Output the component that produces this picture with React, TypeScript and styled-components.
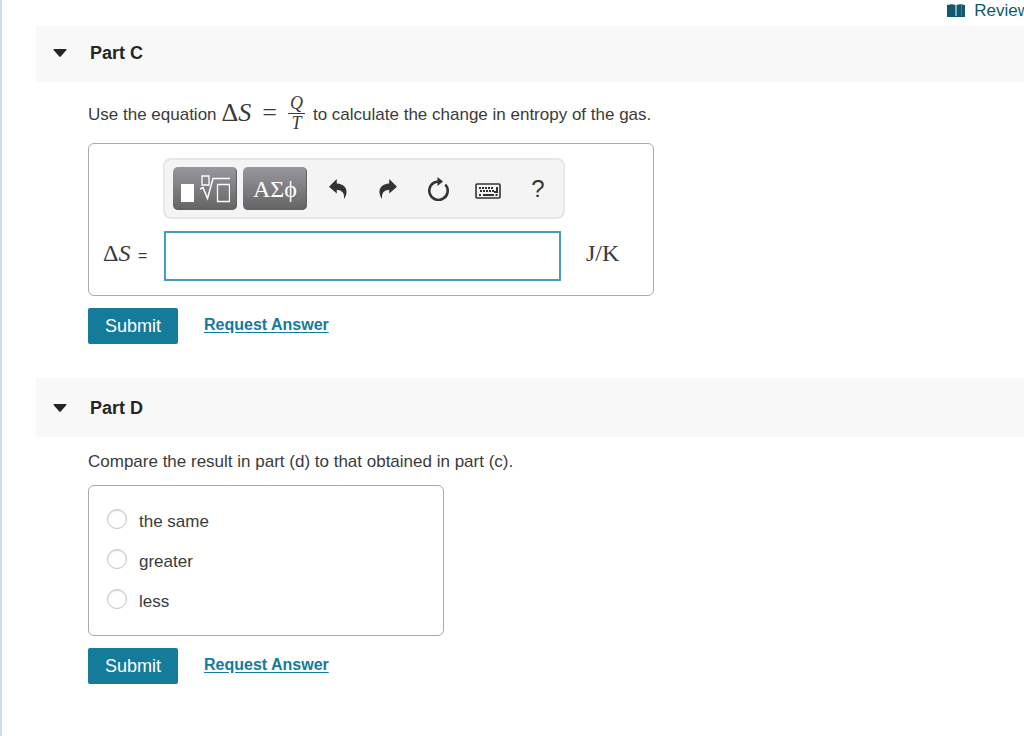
import React from 'react';
import styled, { createGlobalStyle } from 'styled-components';

const GlobalStyle = createGlobalStyle`
  * { box-sizing: border-box; }
  body {
    margin: 0;
    background: #fff;
    color: #3b3b3b;
    font: 17px/24px "Liberation Sans", Arial, sans-serif;
  }
  button, input { font-family: inherit; }
`;

const Page = styled.main`
  min-height: 100vh;
  padding-left: 34px;
  border-left: 2px solid #cfdaec;
  overflow: hidden;
`;

const TopBar = styled.nav`
  display: flex;
  justify-content: flex-end;
  height: 26px;
  margin-right: -6px;
`;

const ReviewLink = styled.a`
  display: flex;
  align-items: center;
  gap: 9px;
  height: 21px;
  color: #10596e;
  text-decoration: none;
`;

const PartHeader = styled.header<{ $tall?: boolean }>`
  display: flex;
  align-items: center;
  gap: 23px;
  padding: ${(p) => (p.$tall ? '18px 17px 17px' : '15px 17px 17px')};
  background: #f8f8f8;
`;

const Toggle = styled.button`
  display: flex;
  padding: 0;
  border: 0;
  background: none;
`;

const PartTitle = styled.h2`
  margin: 0;
  color: #252525;
  font-size: 18px;
  line-height: 24px;
`;

const PartBody = styled.div`
  padding: 12px 52px 34px;
`;

const Question = styled.p<{ $math?: boolean }>`
  display: flex;
  align-items: center;
  min-height: ${(p) => (p.$math ? 42 : 26)}px;
  margin: 0 0 ${(p) => (p.$math ? 7 : 10)}px;
`;

const Equation = styled.span`
  display: flex;
  align-items: center;
  gap: 11px;
  margin: 0 8px 4px 5px;
  font-family: "Liberation Serif", serif;
  font-size: 26px;
`;

const Fraction = styled.span`
  display: flex;
  flex-direction: column;
  align-items: center;
  width: 17px;
  font-size: 18px;
  font-style: italic;
  line-height: 18px;
`;

const Numerator = styled.span`
  width: 100%;
  padding-bottom: 1px;
  border-bottom: 1px solid #3b3b3b;
  text-align: center;
`;

const AnswerBox = styled.div`
  display: grid;
  grid-template-columns: 60px 402px auto;
  row-gap: 12px;
  align-items: center;
  max-width: 566px;
  padding: 14px;
  border: 1px solid #aaa;
  border-radius: 6px;
`;

const Toolbar = styled.div`
  grid-column: 2;
  display: flex;
  align-items: center;
  height: 61px;
  padding-left: 8px;
  border: 2px solid #e6e6e6;
  border-radius: 8px;
  background: #f4f4f4;
`;

const PaletteButton = styled.button`
  display: flex;
  align-items: center;
  justify-content: center;
  width: 64px;
  height: 43px;
  margin-right: 6px;
  padding: 0;
  border: 0;
  border-radius: 5px;
  background: linear-gradient(#98979f, #646464);
  box-shadow: inset -1px -1px 1px #606060;
  color: #fff;
  font-family: "Liberation Serif", serif;
  font-size: 24px;
  line-height: 24px;
`;

const ToolButton = styled.button`
  display: flex;
  align-items: center;
  justify-content: center;
  width: 50px;
  height: 43px;
  padding: 0;
  border: 0;
  background: none;
  color: #333;
  font-size: 24px;
`;

const VariableLabel = styled.label`
  grid-column: 1;
  padding-bottom: 4px;
  font-size: 16px;
  white-space: nowrap;
`;

const Variable = styled.span`
  margin-right: 3px;
  font-family: "Liberation Serif", serif;
  font-size: 24px;
`;

const AnswerInput = styled.input`
  width: 397px;
  height: 50px;
  margin-left: 1px;
  padding: 0 10px;
  border: 2px solid #4a9db8;
  background: #fff;
  font-size: 18px;
`;

const Units = styled.span`
  padding: 0 0 6px 21px;
  font-family: "Liberation Serif", serif;
  font-size: 24px;
`;

const Choices = styled.fieldset`
  display: flex;
  flex-direction: column;
  gap: 14px;
  max-width: 356px;
  margin: 0;
  padding: 23px 18px 20px;
  border: 1px solid #aaa;
  border-radius: 6px;
`;

const Choice = styled.label`
  display: flex;
  align-items: flex-start;
  gap: 12px;
  line-height: 26px;
`;

const Radio = styled.input`
  appearance: none;
  width: 20px;
  height: 20px;
  margin: 0;
  border: 1px solid #c4c4c4;
  border-radius: 50%;
  background: #fff;
  box-shadow: inset 0 1px 1px #ddd;
`;

const Actions = styled.div`
  display: flex;
  align-items: center;
  gap: 26px;
  margin-top: 12px;
`;

const SubmitButton = styled.button`
  width: 90px;
  height: 36px;
  padding: 0;
  border: 0;
  border-radius: 2px;
  background: #147b9a;
  color: #fff;
  font-size: 18px;
`;

const RequestLink = styled.a`
  padding-bottom: 3px;
  color: #147b9a;
  font-size: 16px;
  font-weight: bold;
  text-underline-offset: 2px;
`;

function Part({ title, tall, children }: { title: string; tall?: boolean; children: React.ReactNode }) {
  return (
    <section>
      <PartHeader $tall={tall}>
        <Toggle type="button" aria-label={`Collapse ${title}`}>
          <svg width="14" height="8" viewBox="0 0 14 8">
            <path d="M1 0h12q1 0 .4 1L8 7.2q-1 1-2 0L.6 1Q0 0 1 0Z" fill="#252525" />
          </svg>
        </Toggle>
        <PartTitle>{title}</PartTitle>
      </PartHeader>
      <PartBody>
        {children}
        <Actions>
          <SubmitButton type="button">Submit</SubmitButton>
          <RequestLink href="#request">Request Answer</RequestLink>
        </Actions>
      </PartBody>
    </section>
  );
}

const BookIcon = () => (
  <svg width="18" height="14" viewBox="0 0 18 14" fill="#10596e">
    <path d="M0 1Q5-.6 8.5 1v11.6Q5 11.400 0 12.600ZM9.500 1Q13-.6 18 1v11.600Q13 11.400 9.500 12.600Z" />
    <path d="M0 13h18v-1H0Z" />
    <path d="M14.500 1v11" stroke="#3b7f92" />
  </svg>
);

const RootIcon = () => (
  <svg width="50" height="28" viewBox="0 0 50 28" fill="none" stroke="#fff">
    <path d="M1 9h13v18H1Z" fill="#fff" stroke="none" />
    <path d="M22 1h7v9h-7Z" strokeWidth="1.300" />
    <path d="M20 14l3-1.500 4.500 11L33 3.500h17" strokeWidth="1.500" />
    <path d="M37.500 9.500h12v17h-12Z" strokeWidth="1.300" />
  </svg>
);

const ArrowPath = () => (
  <path d="M0 8 8 0v4.500C15 5 18.500 9 18 14q-.3 3-2.500 6.500 1-9-7.500-9.500V15Z" fill="#333" />
);

const UndoIcon = () => (
  <svg width="18" height="20" viewBox="0 0 18.500 20.500">
    <ArrowPath />
  </svg>
);

const RedoIcon = () => (
  <svg width="18" height="20" viewBox="0 0 18.500 20.500">
    <g transform="translate(18.500 0) scale(-1 1)">
      <ArrowPath />
    </g>
  </svg>
);

const ResetIcon = () => (
  <svg width="22" height="24" viewBox="0 0 22 24">
    <path d="M18.300 7.500A9.200 9.200 0 1 1 11 4.500" fill="none" stroke="#333" strokeWidth="2.600" />
    <path d="M10.500 0 16 4.600 10.500 9Z" fill="#333" />
  </svg>
);

const KeyboardIcon = () => (
  <svg width="26" height="20" viewBox="0 -4 26 20" fill="none" stroke="#333">
    <rect x="1" y="1" width="24" height="14" rx="1" strokeWidth="1.600" />
    <path d="M4 5h15M5 8h14" strokeWidth="2" strokeDasharray="2 1" />
    <path d="M22 4v5h-3" strokeWidth="2" />
    <path d="M4 12h2M8 12h11M20.500 12h2" strokeWidth="2" />
  </svg>
);

export default function App() {
  return (
    <>
      <GlobalStyle />
      <Page>
        <TopBar>
          <ReviewLink href="#review">
            <BookIcon />
            Review
          </ReviewLink>
        </TopBar>

        <Part title="Part C">
          <Question $math>
            Use the equation
            <Equation>
              <span>Δ<i>S</i></span>
              <span>=</span>
              <Fraction>
                <Numerator>Q</Numerator>
                <span>T</span>
              </Fraction>
            </Equation>
            to calculate the change in entropy of the gas.
          </Question>
          <AnswerBox>
            <Toolbar>
              <PaletteButton type="button" aria-label="Templates"><RootIcon /></PaletteButton>
              <PaletteButton type="button">ΑΣϕ</PaletteButton>
              <ToolButton type="button" aria-label="Undo"><UndoIcon /></ToolButton>
              <ToolButton type="button" aria-label="Redo"><RedoIcon /></ToolButton>
              <ToolButton type="button" aria-label="Reset"><ResetIcon /></ToolButton>
              <ToolButton type="button" aria-label="Keyboard shortcuts"><KeyboardIcon /></ToolButton>
              <ToolButton type="button">?</ToolButton>
            </Toolbar>
            <VariableLabel htmlFor="entropy">
              <Variable>Δ<i>S</i></Variable> =
            </VariableLabel>
            <AnswerInput id="entropy" type="text" />
            <Units>J/K</Units>
          </AnswerBox>
        </Part>

        <Part title="Part D" tall>
          <Question>Compare the result in part (d) to that obtained in part (c).</Question>
          <Choices aria-label="Answer choices">
            {['the same', 'greater', 'less'].map((choice) => (
              <Choice key={choice}>
                <Radio type="radio" name="comparison" value={choice} />
                {choice}
              </Choice>
            ))}
          </Choices>
        </Part>
      </Page>
    </>
  );
}
